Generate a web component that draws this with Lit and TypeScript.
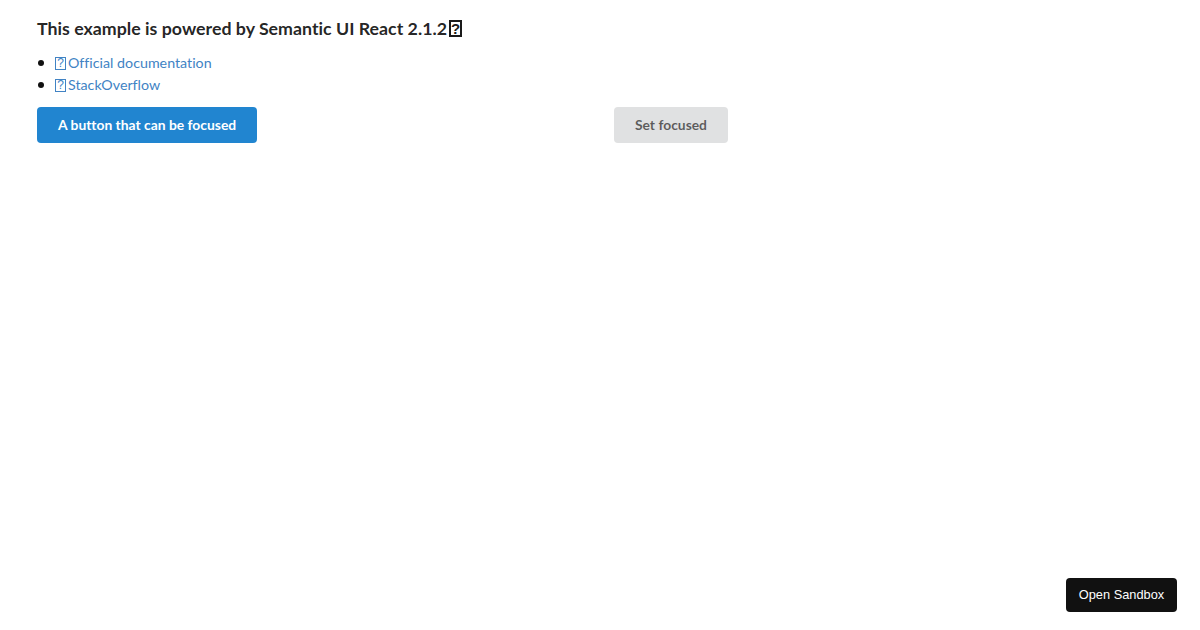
import { LitElement, html, css } from "lit";
import { customElement } from "lit/decorators.js";

@customElement("app-root")
export class AppRoot extends LitElement {
  static styles = css`
    :host {
      display: block;
      position: relative;
      width: 1200px;
      height: 630px;
      overflow: hidden;
      background: #fff;
      font-family: Lato, "Liberation Sans", sans-serif;
      font-size: 14px;
      line-height: 20px;
      color: rgba(0, 0, 0, 0.87);
      font-variant-ligatures: none;
    }
    .page { padding: 14px 37px 0; width: 691px; }
    h1 { margin: 0 0 10px; font-size: 17.8px; line-height: 28px; font-weight: 700; display: flex; align-items: center; gap: 2px; }
    ul { margin: 0 0 11px; padding: 0; list-style: none; }
    li { display: flex; align-items: center; height: 22px; line-height: 22px; font-size: 14.25px; padding-left: 1px; }
    li::before { content: ""; width: 6px; height: 6px; border-radius: 50%; background: #111; margin-right: 11px; }
    a { color: #4183c4; text-decoration: none; display: inline-flex; align-items: center; gap: 2px; }
    .tofu {
      display: inline-flex; align-items: center; justify-content: center; box-sizing: border-box;
      width: 11px; height: 13px; border: 1px solid currentColor; overflow: hidden;
      font: 400 12px/1 "Liberation Sans", sans-serif;
    }
    h1 .tofu { width: 13px; height: 17px; border-width: 2px; font-size: 15px; font-weight: 700; color: #1a1a1a; }
    .row { display: flex; justify-content: space-between; }
    button {
      border: 0; border-radius: 4px; height: 36px; padding: 0 21px;
      font: 700 13.86px/1 Lato, "Liberation Sans", sans-serif;
      font-variant-ligatures: none;
    }
    .primary { background: #2185d0; color: #fff; }
    .secondary { background: #e0e1e2; color: rgba(0, 0, 0, 0.6); }
    .sandbox {
      position: absolute; right: 23px; bottom: 18px; height: 34px; width: 111px;
      background: #111; color: #fff; border-radius: 4px; padding: 0 0 2px;
      font: 400 12.8px "Liberation Sans", Arial, sans-serif;
    }
  `;
  render() {
    return html`<div class="page">
        <h1>This example is powered by Semantic UI React 2.1.2<span class="tofu">?</span></h1>
        <ul>
          <li><a href="#"><span class="tofu">?</span>Official documentation</a></li>
          <li><a href="#"><span class="tofu">?</span>StackOverflow</a></li>
        </ul>
        <div class="row">
          <button class="primary">A button that can be focused</button>
          <button class="secondary">Set focused</button>
        </div>
      </div>
      <button class="sandbox">Open Sandbox</button>`;
  }
}
